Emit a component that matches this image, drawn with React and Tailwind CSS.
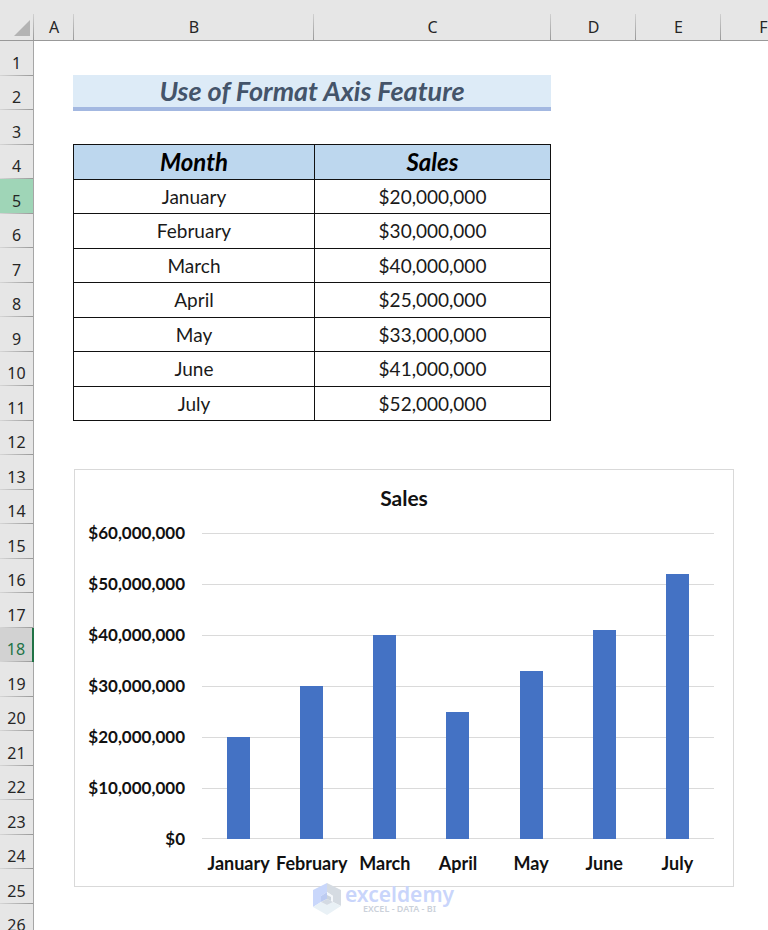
import clsx from 'clsx';

const columns = [
  { name: 'A', width: 'w-10' },
  { name: 'B', width: 'w-[240px]' },
  { name: 'C', width: 'w-[237px]' },
  { name: 'D', width: 'w-[85px]' },
  { name: 'E', width: 'w-[85px]' },
  { name: 'F', width: 'w-[85px]' },
];

const rows = Array.from({ length: 26 }, (_, i) => i + 1);

const sales = [
  { month: 'January', value: 20000000 },
  { month: 'February', value: 30000000 },
  { month: 'March', value: 40000000 },
  { month: 'April', value: 25000000 },
  { month: 'May', value: 33000000 },
  { month: 'June', value: 41000000 },
  { month: 'July', value: 52000000 },
];

const AXIS_MAX = 60000000;
const ticks = [60000000, 50000000, 40000000, 30000000, 20000000, 10000000, 0];

const money = (value) => '$' + value.toLocaleString('en-US');

function ColumnHeaders() {
  return (
    <div className="flex h-[41px] pt-[14px] bg-[#e6e6e6] border-b border-[#999999] font-['Noto_Sans',sans-serif] text-base text-[#262626]">
      <div className="relative flex w-[34px] shrink-0 items-end justify-end pr-1 pb-1">
        <svg className="w-4 h-4" viewBox="0 0 16 16" aria-hidden="true">
          <path d="M16 0V16H0Z" fill="#b3b3b3" />
        </svg>
        <span className="absolute right-0 top-0 h-full w-px bg-linear-to-b from-[#d0d0d0] to-[#999999]" />
      </div>
      {columns.map((col) => (
        <div key={col.name} className={clsx('relative flex shrink-0 items-center justify-center', col.width)}>
          {col.name}
          <span className="absolute right-0 top-0 h-full w-px bg-linear-to-b from-[#d0d0d0] to-[#999999]" />
        </div>
      ))}
    </div>
  );
}

function RowHeaders() {
  return (
    <ol className="w-[34px] shrink-0 font-['Noto_Sans',sans-serif] text-base">
      {rows.map((row) => (
        <li
          key={row}
          className={clsx(
            'flex flex-col border-r odd:h-[35px] even:h-[34px]',
            row === 5 && 'bg-[#9fd5b7] border-[#a6a6a6] text-[#262626]',
            row === 18 && 'bg-[#d2d2d2] border-r-2 border-[#217346] text-[#217346]',
            row !== 5 && row !== 18 && 'bg-[#e6e6e6] border-[#a6a6a6] text-[#262626]'
          )}
        >
          <span className="flex flex-1 items-end justify-center leading-6">{row}</span>
          <span className="h-px bg-linear-to-r from-[#d6d6d6] to-[#999999]" />
        </li>
      ))}
    </ol>
  );
}

function SalesTable() {
  return (
    <table className="mt-[33px] w-full table-fixed border-collapse text-center text-[19px] leading-6 text-[#1a1a1a]">
      <colgroup>
        <col className="w-[241px]" />
        <col />
      </colgroup>
      <thead>
        <tr className="h-[35px] bg-[#bdd7ee] text-2xl italic text-black">
          <th className="border border-[#111111] p-0 font-bold">Month</th>
          <th className="border border-[#111111] p-0 font-bold">Sales</th>
        </tr>
      </thead>
      <tbody>
        {sales.map((item) => (
          <tr key={item.month} className="odd:h-[34px] even:h-[35px]">
            <td className="border border-[#111111] p-0">{item.month}</td>
            <td className="border border-[#111111] p-0">{money(item.value)}</td>
          </tr>
        ))}
      </tbody>
    </table>
  );
}

function SalesChart() {
  return (
    <section className="mt-12 ml-px w-full max-w-[660px] h-[418px] border border-[#d9d9d9] bg-white font-bold text-[#111111]">
      <h2 className="pt-3 h-[37px] text-center text-[21px] leading-8">Sales</h2>
      <div className="flex pl-[11px] pr-[19px]">
        <div className="w-[99px] shrink-0 text-right text-[17px]">
          {ticks.map((tick) => (
            <div key={tick} className="leading-[51px]">{money(tick)}</div>
          ))}
        </div>
        <div className="ml-[17px] flex-1 pt-[26px]">
          <div className="grid">
            <div className="col-start-1 row-start-1">
              {ticks.slice(1).map((tick) => (
                <div key={tick} className="h-[51px] border-t border-[#dadada] last:border-b" />
              ))}
            </div>
            <div className="col-start-1 row-start-1 flex h-[306px] items-end">
              {sales.map((item) => (
                <div key={item.month} className="flex h-full flex-1 items-end justify-center">
                  <div className="w-[23px] bg-[#4472c4]" style={{ height: `${(item.value / AXIS_MAX) * 100}%` }} />
                </div>
              ))}
            </div>
          </div>
          <div className="flex pt-3 text-lg">
            {sales.map((item) => (
              <div key={item.month} className="flex w-0 flex-1 justify-center leading-6">
                <span className="whitespace-nowrap leading-6">{item.month}</span>
              </div>
            ))}
          </div>
        </div>
      </div>
    </section>
  );
}

function Watermark() {
  return (
    <div className="absolute left-60 bottom-0 flex translate-y-7 items-center gap-1">
      <svg className="w-7 h-8" viewBox="0 0 28 32" aria-hidden="true">
        <path d="M14 0L0 7V24L8 19V13L14 9Z" fill="#c9d7fb" />
        <path d="M14 0L28 7V23L20 19V13L14 9Z" fill="#d5dbe2" />
        <path d="M0 24L8 19L14 22L20 19L28 23L14 32Z" fill="#e9f1f6" />
        <path d="M14 9L20 13V19L14 16Z" fill="#f4f7fb" />
        <path d="M14 9L8 13V19L14 16Z" fill="#bccbf2" />
        <path d="M8 19L14 16L20 19L14 22Z" fill="#d3dae3" />
        <path d="M14 12L18 14V18L14 16Z" fill="#ccd4dd" />
      </svg>
      <div className="flex flex-col items-center font-['Noto_Sans',sans-serif]">
        <span className="text-[21px] font-semibold leading-5 text-[#c9d5fb]">exceldemy</span>
        <span className="text-[9px] font-semibold leading-[10px] text-[#cbd1da]">EXCEL - DATA - BI</span>
      </div>
    </div>
  );
}

export default function App() {
  return (
    <div className="h-screen overflow-hidden bg-white">
      <ColumnHeaders />
      <div className="flex">
        <RowHeaders />
        <main className="min-w-0 flex-1 pt-[34px] pl-[39px] pr-[33px] font-[Lato,sans-serif]">
          <div className="w-[478px]">
            <h1 className="h-9 border-b-4 border-[#a3b8e1] bg-[#ddebf7] text-center text-[27px] font-bold italic leading-8 text-[#44546a]">
              Use of Format Axis Feature
            </h1>
            <SalesTable />
          </div>
          <div className="relative">
            <SalesChart />
            <Watermark />
          </div>
        </main>
      </div>
    </div>
  );
}
